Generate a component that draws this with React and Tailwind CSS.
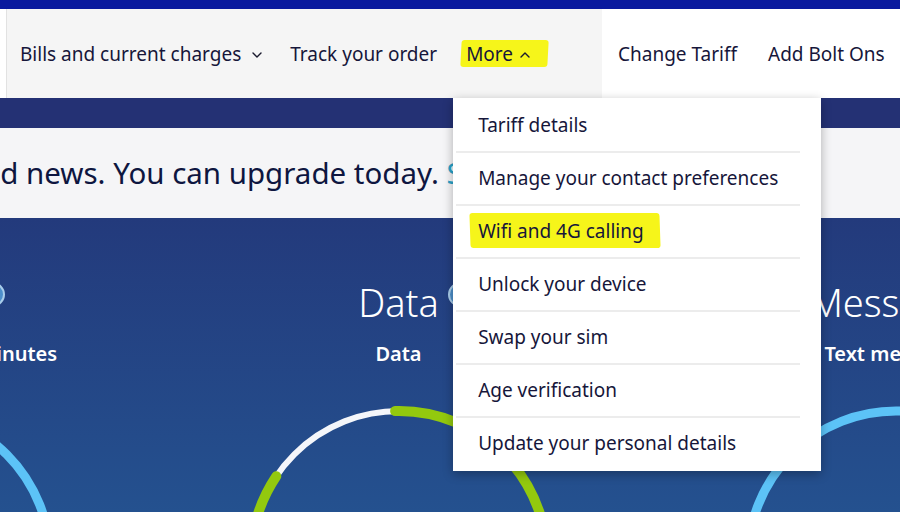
import React from 'react'

const menuItems = [
  'Tariff details',
  'Manage your contact preferences',
  'Wifi and 4G calling',
  'Unlock your device',
  'Swap your sim',
  'Age verification',
  'Update your personal details',
]

const columns = [
  { title: 'Minutes', label: 'UK landline and mobile minutes', ring: 'blue' },
  { title: 'Data', label: 'Data', ring: 'data' },
  { title: 'Messages', label: 'Text messages', ring: 'blue' },
]

function Chevron({ up }) {
  return (
    <svg width="10" height="6" viewBox="0 0 10 6" className="shrink-0">
      <polyline
        points={up ? '1,5 5,1 9,5' : '1,1 5,5 9,1'}
        fill="none"
        stroke="#1a1a2e"
        strokeWidth="1.4"
        strokeLinecap="round"
        strokeLinejoin="round"
      />
    </svg>
  )
}

// arc helper, angles in degrees, screen coords (0 = right, 90 = down)
function arc(cx, cy, r, a0, a1) {
  const rad = a => (a * Math.PI) / 180
  const x0 = cx + r * Math.cos(rad(a0))
  const y0 = cy + r * Math.sin(rad(a0))
  const x1 = cx + r * Math.cos(rad(a1))
  const y1 = cy + r * Math.sin(rad(a1))
  const large = (a1 - a0 + 360) % 360 > 180 ? 1 : 0
  return `M ${x0} ${y0} A ${r} ${r} 0 ${large} 1 ${x1} ${y1}`
}

function Ring({ kind }) {
  return (
    <svg width="310" height="310" viewBox="0 0 310 310" className="shrink-0">
      {kind === 'data' ? (
        <>
          <circle cx="155" cy="155" r="148" fill="none" stroke="#f4f6fa" strokeWidth="6" />
          <path d={arc(155, 155, 148, 268.5, 214)} fill="none" stroke="#93c90e" strokeWidth="10" strokeLinecap="round" />
        </>
      ) : (
        <circle cx="155" cy="155" r="148" fill="none" stroke="#5cc3f7" strokeWidth="9" />
      )}
    </svg>
  )
}

export default function App() {
  return (
    <div className="relative w-[900px] h-[512px] overflow-hidden bg-white font-['Noto_Sans',sans-serif] text-[#16163a]">
      <div className="h-[9px] bg-[#0a1a9e]" />

      <nav className="relative z-20 flex h-[89px] bg-white">
        <div className="w-[7px] border-r border-[#e2e2e2]" />
        <div className="flex w-[595px] items-center bg-[#f5f5f5] pl-[13px] pt-[2px] text-[19px]">
          <div className="flex items-center gap-[11px]">
            <span>Bills and current charges</span>
            <Chevron />
          </div>
          <span className="ml-[28px]">Track your order</span>
          <div className="relative ml-[29px] flex h-full items-center">
            <span className="absolute left-[-5px] top-[29px] h-[27px] w-[87px] -skew-x-3 rounded-[3px] bg-[#f6f51a]" />
            <span className="relative flex items-center gap-[7px]">
              More
              <Chevron up />
            </span>

            <ul className="absolute left-[-13px] top-full w-[368px] bg-white pt-[2px] pb-[2px] shadow-[0_3px_10px_rgba(0,0,0,0.3)]">
              {menuItems.map((item, i) => (
                <li key={item}>
                  {i > 0 && <div className="ml-[3px] mr-[21px] h-[2px] bg-[#ececec]" />}
                  <div className="relative flex h-[51px] items-center pl-[25px] text-[19px]">
                    {item === 'Wifi and 4G calling' && (
                      <span className="absolute left-[17px] top-[7px] h-[35px] w-[190px] skew-x-2 rounded-[3px] bg-[#f6f51a]" />
                    )}
                    <span className="relative">{item}</span>
                  </div>
                </li>
              ))}
            </ul>
          </div>
        </div>
        <div className="flex items-center gap-[31px] pl-[16px] pt-[2px] text-[19px]">
          <span>Change Tariff</span>
          <span>Add Bolt Ons</span>
        </div>
      </nav>

      <div className="h-[30px] bg-[#243174]" />

      <div className="flex h-[90px] items-center overflow-hidden bg-[#f5f5f7]">
        <p className="ml-[-57px] whitespace-nowrap text-[29.5px] text-[#0e1640]">
          Good news. You can upgrade today. <span className="text-[#2aa3c9]">See offers</span>
        </p>
      </div>

      <section className="h-[294px] overflow-hidden bg-gradient-to-b from-[#233a7c] to-[#24518f]">
        <div className="ml-[-347px] flex">
          {columns.map(c => (
            <div key={c.title} className="flex w-[497px] shrink-0 flex-col items-center text-white">
              <div className="relative mt-[61px] text-[38px] font-light leading-[46px]">
                {c.title}
                <span className="absolute left-full top-[3px] ml-[9px] h-[25px] w-[25px] rounded-full border-2 border-[#a9cdea] bg-[#4d8fca]" />
              </div>
              <div className="mt-[15px] whitespace-nowrap text-[20px] font-semibold leading-[28px]">{c.label}</div>
              <div className="mt-[36px]">
                <Ring kind={c.ring} />
              </div>
            </div>
          ))}
        </div>
      </section>
    </div>
  )
}
